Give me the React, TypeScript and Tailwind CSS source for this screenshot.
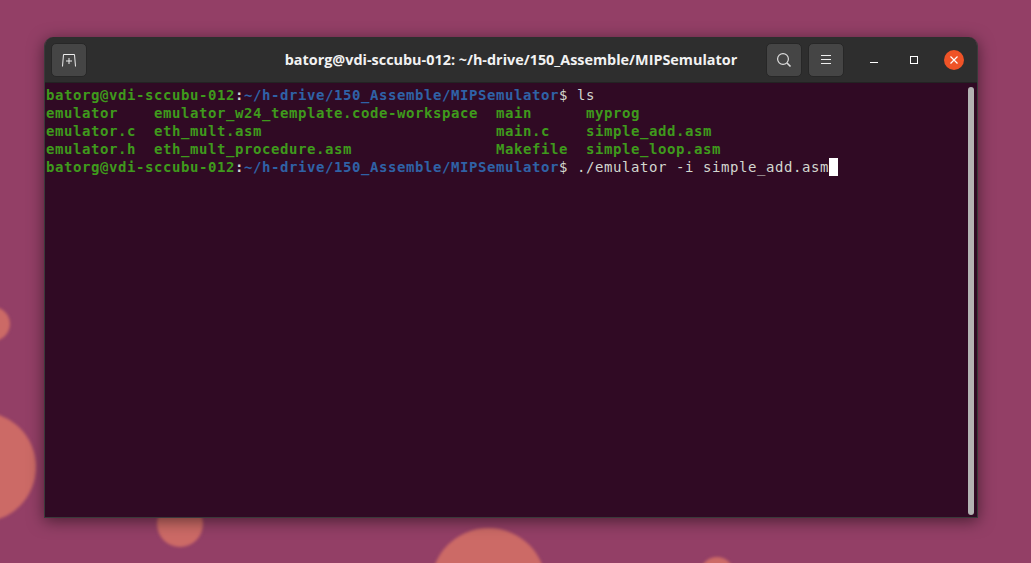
// Ubuntu desktop with a gnome-terminal window
const Prompt = () => (
  <>
    <span className="font-bold text-[#3f9a1c]">batorg@vdi-sccubu-012</span>
    <span className="font-bold text-[#d3d7cf]">:</span>
    <span className="font-bold text-[#2f62a6]">~/h-drive/150_Assemble/MIPSemulator</span>
    <span className="text-[#d3d7cf]">$ </span>
  </>
);

const lsRows = [
  'emulator    emulator_w24_template.code-workspace  main      myprog',
  'emulator.c  eth_mult.asm                          main.c    simple_add.asm',
  'emulator.h  eth_mult_procedure.asm                Makefile  simple_loop.asm',
];

function HeaderButton({ children }: { children: React.ReactNode }) {
  return (
    <div className="flex h-[34px] w-[36px] items-center justify-center rounded-[5px] border border-[#272727] bg-[#454545]">
      {children}
    </div>
  );
}

export default function App() {
  return (
    <div className="relative h-[563px] w-[1031px] overflow-hidden bg-[#933f66] pl-[44px] pt-[37px]">
      {/* wallpaper bokeh */}
      <div className="absolute left-[-24px] top-[307px] h-[34px] w-[34px] rounded-full bg-[#cc6a66] blur-[1.5px]" />
      <div className="absolute left-[-74px] top-[412px] h-[110px] w-[110px] rounded-full bg-[#cc6a66] blur-[1.5px]" />
      <div className="absolute left-[157px] top-[501px] h-[46px] w-[46px] rounded-full bg-[#cc6a66] blur-[1.5px]" />
      <div className="absolute left-[431px] top-[528px] h-[115px] w-[115px] rounded-full bg-[#cc6a66] blur-[1.5px]" />
      <div className="absolute left-[700px] top-[557px] h-[34px] w-[34px] rounded-full bg-[#cc6a66] blur-[1.5px]" />

      <div className="relative flex h-[481px] w-[934px] flex-col overflow-hidden rounded-t-[9px] border-x border-b border-[#3a3a3a] shadow-[0_3px_16px_rgba(0,0,0,0.5)]">
        {/* title bar */}
        <div className="grid h-[46px] shrink-0 grid-cols-[1fr_auto_1fr] items-center border-b border-[#232323] bg-[#2e2e2e] px-[6px]">
          <div className="flex">
            <HeaderButton>
              <svg width="16" height="14" viewBox="0 0 16 14" fill="none" stroke="#eeeeee" strokeWidth="1">
                <path d="M1.5 13.5 L2.5 1.5 H13.5 L14.5 13.5" fill="none" />
                <path d="M8 5 V11 M5 8 H11" />
              </svg>
            </HeaderButton>
          </div>
          <div className="text-center font-['Open_Sans','Noto_Sans',sans-serif] text-[14.4px] font-bold text-[#f2f2f2]">
            batorg@vdi-sccubu-012: ~/h-drive/150_Assemble/MIPSemulator
          </div>
          <div className="mr-[7px] flex items-center justify-end">
            <div className="flex items-center gap-[6px]">
              <HeaderButton>
                <svg width="16" height="16" viewBox="0 0 16 16" fill="none" stroke="#dddddd" strokeWidth="1.2">
                  <circle cx="7" cy="7" r="5.4" />
                  <path d="M11 11 L14.5 14.5" strokeWidth="1.6" />
                </svg>
              </HeaderButton>
              <HeaderButton>
                <svg width="12" height="10" viewBox="0 0 12 10" fill="none" stroke="#eeeeee" strokeWidth="1">
                  <path d="M1 0.5 H11 M1 4.5 H11 M1 8.5 H11" />
                </svg>
              </HeaderButton>
            </div>
            <div className="ml-[20px] flex items-center">
              <div className="flex h-[20px] w-[20px] items-center justify-center">
                <div className="mt-[6px] h-px w-[8px] bg-white" />
              </div>
              <div className="ml-[20px] flex h-[20px] w-[20px] items-center justify-center">
                <div className="h-[8px] w-[8px] border border-white" />
              </div>
              <div className="ml-[20px] flex h-[20px] w-[20px] items-center justify-center rounded-full bg-[#ef5327]">
                <svg width="8" height="8" viewBox="0 0 8 8" stroke="#ffffff" strokeWidth="1.2">
                  <path d="M0.5 0.5 L7.5 7.5 M7.5 0.5 L0.5 7.5" />
                </svg>
              </div>
            </div>
          </div>
        </div>

        {/* terminal */}
        <div className="relative flex-1 bg-[#300a24] pl-px pt-[3px] font-['DejaVu_Sans_Mono',monospace] text-[14px] leading-[18px] tracking-[0.57px]">
          <div className="whitespace-pre">
            <Prompt />
            <span className="text-[#d3d7cf]">ls</span>
          </div>
          {lsRows.map((row) => (
            <div key={row} className="whitespace-pre font-bold text-[#3f9a1c]">
              {row}
            </div>
          ))}
          <div className="flex items-center whitespace-pre">
            <div>
              <Prompt />
              <span className="text-[#d3d7cf]">./emulator -i simple_add.asm</span>
            </div>
            <div className="h-[18px] w-[9px] bg-white" />
          </div>
          {/* scrollbar */}
          <div className="absolute bottom-[2px] right-[3px] top-[4px] w-[6px] rounded-full bg-[#b3b3b3]" />
        </div>
      </div>
    </div>
  );
}
